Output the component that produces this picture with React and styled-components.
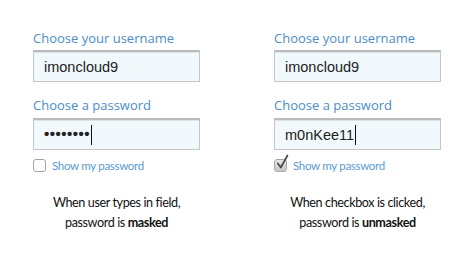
import React from "react";
import styled, { createGlobalStyle } from "styled-components";

const Global = createGlobalStyle`
  html, body { margin: 0; padding: 0; background: #fff; }
  body { width: 474px; height: 262px; overflow: hidden; }
`;

const Page = styled.div`
  width: 474px;
  height: 262px;
  box-sizing: border-box;
  display: grid;
  grid-template-columns: 167px 167px;
  column-gap: 74px;
  padding: 29px 0 0 33px;
  background: #fff;
`;

const Column = styled.div`
  display: flex;
  flex-direction: column;
`;

const Label = styled.div`
  font-family: "Open Sans", sans-serif;
  font-size: 13px;
  line-height: 18px;
  color: #4b8dc6;
  margin-bottom: ${(p) => p.$mb || 3}px;
`;

const Field = styled.div`
  box-sizing: border-box;
  height: 32px;
  display: flex;
  align-items: center;
  padding-left: 10px;
  background: #f1f9fd;
  border: 1px solid #c4c6c8;
  border-top: 2px solid #b9bbbd;
  box-shadow: inset 0 1px 0 #e0e4e6;
  font-family: "Liberation Sans", Arial, sans-serif;
  font-size: 14.5px;
  color: #222;
  margin-bottom: ${(p) => p.$mb || 0}px;
`;

const Caret = styled.span`
  display: inline-block;
  width: 1px;
  height: 20px;
  background: #111;
  margin-left: 1px;
`;

const Dots = styled.span`
  letter-spacing: 0.5px;
  font-size: 15px;
  font-weight: bold;
  position: relative;
  top: -1px;
`;

const CheckRow = styled.div`
  display: flex;
  align-items: center;
  gap: 6px;
  margin-top: 8px;
  height: 14px;
`;

const Box = styled.span`
  position: relative;
  box-sizing: border-box;
  width: 13px;
  height: 13px;
  border-radius: 3px;
  border: 1px solid ${(p) => (p.$checked ? "#a9a9a9" : "#9ea3a8")};
  background: ${(p) =>
    p.$checked ? "linear-gradient(#e6e6e6, #c6c6c6)" : "#fff"};
`;

const CheckMark = styled.svg`
  position: absolute;
  left: 1px;
  top: -6px;
`;

const CheckLabel = styled.span`
  font-family: Lato, sans-serif;
  font-size: 11.5px;
  letter-spacing: -0.3px;
  color: #5a9bd0;
`;

const Caption = styled.div`
  margin-top: 21px;
  text-align: center;
  font-family: Lato, sans-serif;
  font-size: 12.6px;
  letter-spacing: -0.4px;
  line-height: 20px;
  color: #111;
  b { font-weight: 700; }
`;

function Panel({ checked, password, caption }) {
  return (
    <Column>
      <Label>Choose your username</Label>
      <Field $mb={14}>imoncloud9</Field>
      <Label $mb={4}>Choose a password</Label>
      <Field>
        {checked ? password : <Dots>••••••••</Dots>}
        <Caret />
      </Field>
      <CheckRow>
        <Box $checked={checked}>
          {checked && (
            <CheckMark width="14" height="16" viewBox="0 0 14 16">
              <path
                d="M1.8 9.5 L4.8 13.5 L11.5 1.5"
                fill="none"
                stroke="#4a4a4a"
                strokeWidth="1.7"
                strokeLinecap="round"
                strokeLinejoin="round"
              />
            </CheckMark>
          )}
        </Box>
        <CheckLabel>Show my password</CheckLabel>
      </CheckRow>
      <Caption>{caption}</Caption>
    </Column>
  );
}

export default function App() {
  return (
    <>
      <Global />
      <Page>
        <Panel
          checked={false}
          caption={
            <>
              When user types in field,
              <br />
              password is <b>masked</b>
            </>
          }
        />
        <Panel
          checked
          password="m0nKee11"
          caption={
            <>
              When checkbox is clicked,
              <br />
              password is <b>unmasked</b>
            </>
          }
        />
      </Page>
    </>
  );
}
